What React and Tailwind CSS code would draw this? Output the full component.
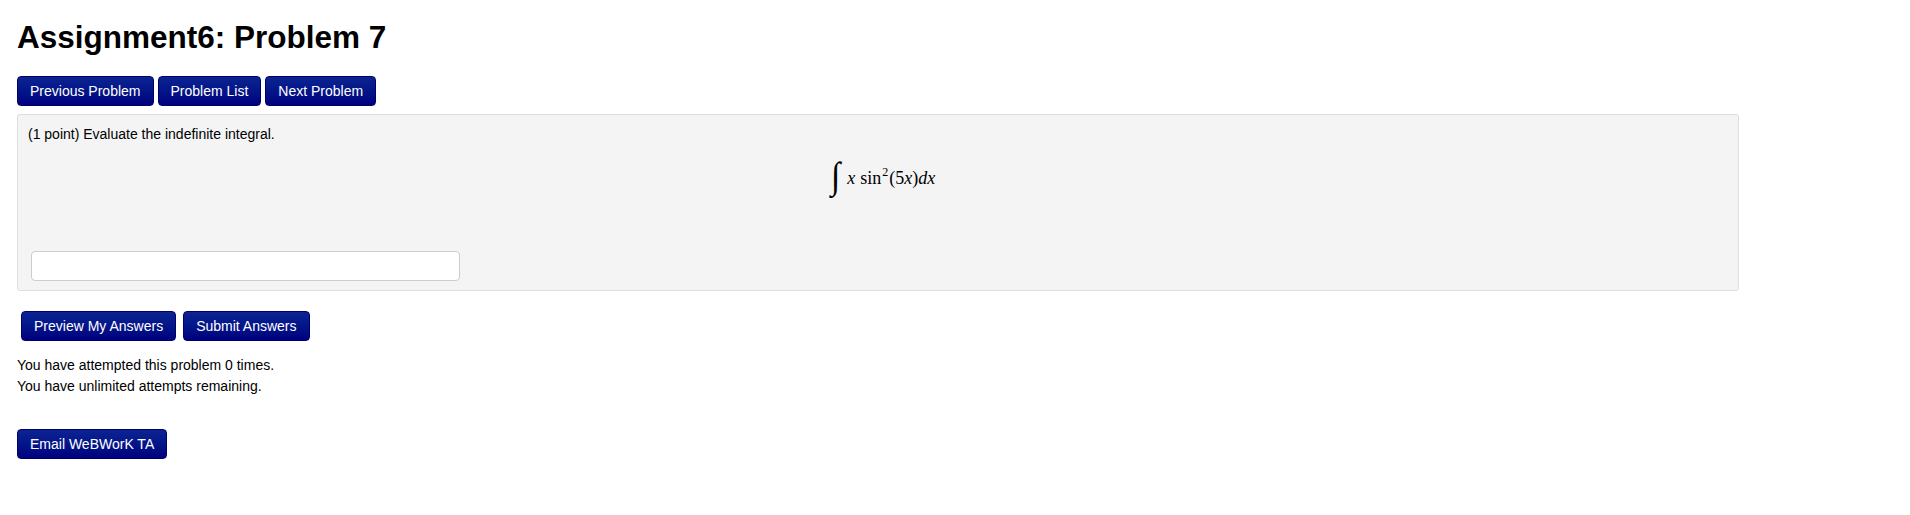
import React from 'react';

const btn =
  'h-[30px] px-[12px] border border-[#000066] rounded-[4px] bg-gradient-to-b from-[#0d2392] to-[#00007f] text-white text-[14px] leading-[28px] whitespace-nowrap';

function MathDisplay() {
  return (
    <div className="flex justify-center items-center h-[40px] font-['Liberation_Serif',serif] text-black">
      <span className="text-[34px] leading-[40px] font-['Liberation_Serif',serif] scale-y-[1.1] inline-block mr-[7px] -mt-[2px]">∫</span>
      <span className="text-[18px] leading-[40px] mt-[2px]">
        <i>x</i>
        <span className="ml-[5px]">sin</span>
        <sup className="text-[12px] ml-[1px] mr-[1px] relative -top-[8px]">2</sup>
        <span>(5</span>
        <i>x</i>
        <span>)</span>
        <i>dx</i>
      </span>
    </div>
  );
}

export default function App() {
  return (
    <div className="min-h-screen bg-white pl-[17px] font-['Liberation_Sans',Arial,sans-serif] text-black">
      <h1 className="pt-[20px] text-[31.5px] leading-[35px] font-bold">Assignment6: Problem 7</h1>

      <div className="mt-[21px] flex gap-[4px]">
        <button className={btn}>Previous Problem</button>
        <button className={btn}>Problem List</button>
        <button className={btn}>Next Problem</button>
      </div>

      <div className="mt-[8px] w-[1722px] h-[177px] border border-[#dedede] rounded-[3px] bg-[#f4f4f4] pt-[9px] pl-[10px]">
        <p className="text-[14px] leading-[20px]">(1 point) Evaluate the indefinite integral.</p>
        <div className="mt-[13px]">
          <MathDisplay />
        </div>
        <input
          type="text"
          className="mt-[54px] ml-[3px] block w-[429px] h-[30px] bg-white border border-[#cccccc] rounded-[4px]"
        />
      </div>

      <div className="mt-[20px] ml-[4px] flex gap-[7px]">
        <button className={btn}>Preview My Answers</button>
        <button className={btn}>Submit Answers</button>
      </div>

      <div className="mt-[14px] text-[14px] leading-[20.5px]">
        <p>You have attempted this problem 0 times.</p>
        <p>You have unlimited attempts remaining.</p>
      </div>

      <div className="mt-[33px] flex">
        <button className={btn}>Email WeBWorK TA</button>
      </div>
    </div>
  );
}
